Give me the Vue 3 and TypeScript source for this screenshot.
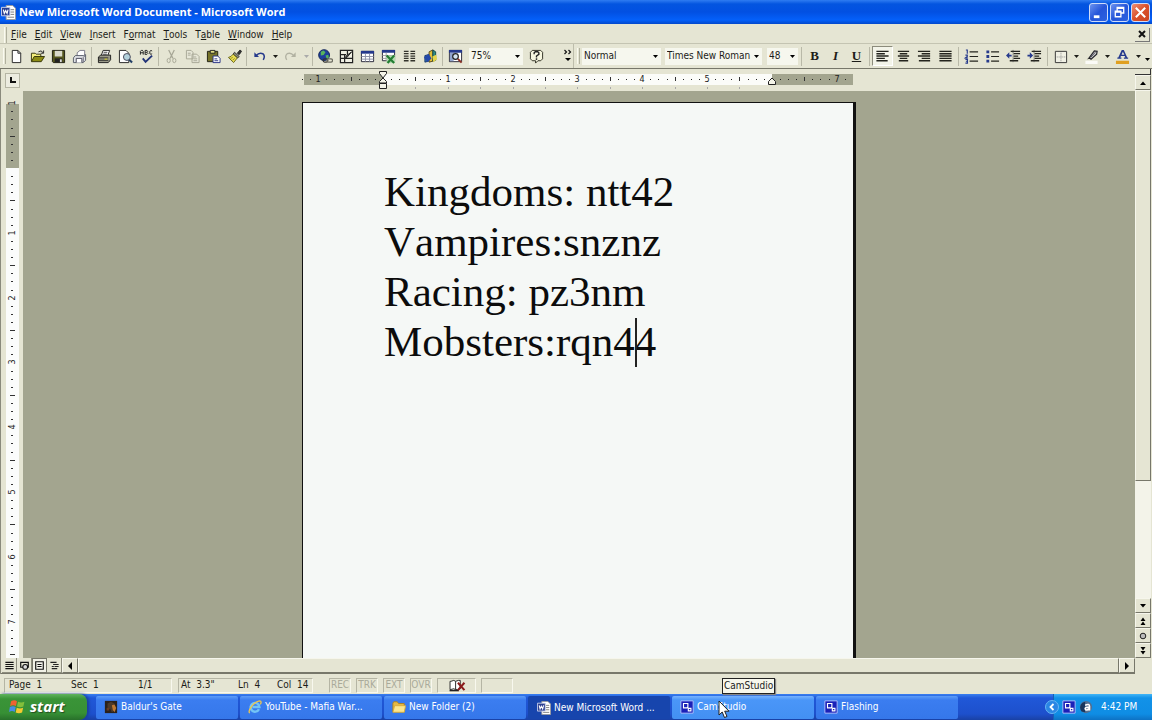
<script setup lang="ts">
import { ref } from 'vue'

interface Tool { icon: string; label: string; menu?: boolean; off?: boolean; on?: boolean }
interface Tick { at: number; kind: 'num' | 'half' | 'dot'; text: string }

const menus: [string, string, string][] = [
  ['', 'F', 'ile'], ['', 'E', 'dit'], ['', 'V', 'iew'], ['', 'I', 'nsert'], ['F', 'o', 'rmat'],
  ['', 'T', 'ools'], ['T', 'a', 'ble'], ['', 'W', 'indow'], ['', 'H', 'elp'],
]

const icons: Record<string, string> = {
  new: '<path d="M3.5 1.5h6l3 3v10h-9z" fill="#fff" stroke="#222"/><path d="M9.500 1.500v3h3" fill="none" stroke="#222"/>',
  open: '<path d="M1.500 13V4.500h4l1 1h5V8" fill="#f3ee7a" stroke="#33330a"/><path d="M1.500 13.500l3-5.500h11l-3.500 5.500z" fill="#8c8c14" stroke="#33330a"/><path d="M9 3q3-2.500 5 1M14.500 1.500V4.500h-3" fill="none" stroke="#222"/>',
  save: '<path d="M1.500 1.500h13v13h-12l-1-1z" fill="#55571f" stroke="#1b1b10"/><path d="M4 2h8v6H4z" fill="#d9d9cb"/><path d="M4 10h8v4H4z" fill="#222"/><path d="M9.500 11h2v3h-2z" fill="#ddd"/>',
  mail: '<path d="M5.500 7.500V4l3-2.500h5v6" fill="#fff" stroke="#778"/><path d="M1.500 9.500l2-2.500h9l2-1v6l-2.500 2.500H1.500z" fill="#dfe1e5" stroke="#555b66"/><path d="M4.500 14.500V10h6v4.500" fill="#fff" stroke="#445"/><path d="M12 14V9l2-2" fill="none" stroke="#667"/>',
  print: '<path d="M4.500 7l2-5.500h7l-2 5.500" fill="#fff" stroke="#222"/><path d="M7 3.500h4M6.500 5.500h4" stroke="#444"/><path d="M1.500 8.500l2.500-2h10.500v5l-2.500 3h-10.500z" fill="#9a9a8a" stroke="#1d1d1d"/><path d="M2 9.500h10M2 12h10" stroke="#222"/><path d="M8 10.800h3" stroke="#e6e01e"/>',
  preview: '<path d="M1.500 1.500h7l3 3v10h-10z" fill="#fff" stroke="#222"/><circle cx="9.500" cy="8.500" r="3.700" fill="#b4d2dc" stroke="#445"/><path d="M12 11.500l3 3" stroke="#233f66" stroke-width="2.200"/>',
  spell: '<path d="M1.500 6V2.500L3 1l1.500 1.500V6M1.500 4h3M6.500 6V1.500h2l.8 1-.8 1h-2M8.500 3.500l1 1.200-1 1h-2M14 2.200L12.800 1.500 11.500 2.500v2.500l1.300.7L14 5" fill="none" stroke="#222"/><path d="M4 10l3 3.800L14 7" fill="none" stroke="#233478" stroke-width="2"/>',
  cut: '<path d="M5 1l4.500 9M11 1L6.500 10" fill="none" stroke="#a6a695" stroke-width="1.300"/><ellipse cx="5" cy="12.300" rx="1.700" ry="2.300" fill="none" stroke="#a6a695"/><ellipse cx="11" cy="12.300" rx="1.700" ry="2.300" fill="none" stroke="#a6a695"/>',
  copy: '<path d="M1.500 1.500h5l2 2v7h-7zM7.500 5.500h5l2.500 2.500v6.500h-7.500z" fill="#e7e7d8" stroke="#a6a695"/><path d="M3 4.500h3M3 6.500h3M9 8.500h3M9 10.500h4M9 12.500h4" stroke="#a6a695"/>',
  paste: '<path d="M1.500 2.500h11v11h-11z" fill="#77742a" stroke="#1f1f12"/><path d="M4.500 1.500h5v3h-5z" fill="#e2dd86" stroke="#222"/><path d="M7.500 7.500h5l2.500 2.500v4.500h-7.500z" fill="#fff" stroke="#263085"/><path d="M9 10.500h3M9 12.500h4" stroke="#263085"/>',
  brush: '<path d="M11 4.500l3-3.500 1.500 1.500L13 6z" fill="#333" stroke="#222"/><path d="M8 3.500l5 4.500-1.500 1.500-5-4z" fill="#8b8b78" stroke="#333"/><path d="M6.500 5.500l4.500 4L7 14.500 1.500 9q3-.5 5-3.500z" fill="#e9dd4f" stroke="#69661f"/><path d="M4 10.500l2-2M6 12l2-2" stroke="#8a8425"/>',
  undo: '<path d="M2.500 3.500v5h5z" fill="#263a8c"/><path d="M4.500 7q3-3.500 7-2 3 2.500.5 6.500" fill="none" stroke="#263a8c" stroke-width="1.600"/>',
  redo: '<path d="M13.500 3.500v5h-5z" fill="#b2b2a2"/><path d="M11.500 7q-3-3.500-7-2-3 2.500-.5 6.500" fill="none" stroke="#b2b2a2" stroke-width="1.400"/>',
  globe: '<circle cx="6.500" cy="6.500" r="5.800" fill="#1e3f9c" stroke="#102457"/><path d="M3 3l3-1.500 2 2-2 3-3 .5zM8 7l3-1 .5 3-2 2z" fill="#58b35d"/><rect x="5.500" y="10.500" width="5" height="3.500" rx="1.700" fill="none" stroke="#333" stroke-width="1.300"/><rect x="9.500" y="10.500" width="6" height="3.500" rx="1.700" fill="none" stroke="#6c6c62" stroke-width="1.300"/>',
  tables: '<path d="M1.500 1.500h13v13h-13z" fill="#f0f0e4" stroke="#222" stroke-width="1.300"/><path d="M1.500 6h6M1.500 10h13M6 6v8.500M9 1.500v5" stroke="#222" stroke-width="1.300"/><path d="M13.500 3l-5 6-1.500 1 .5-2.500z" fill="#555" stroke="#222"/>',
  table: '<path d="M1.500 2.500h13v11h-13z" fill="#fff" stroke="#223"/><path d="M1 2h14v3H1z" fill="#24388c"/><path d="M1.500 8h13M1.500 10.800h13M5.800 5v8.500M10.200 5v8.500" stroke="#8b8fa5"/>',
  excel: '<path d="M1.500 1.500h13v11h-13z" fill="#fff" stroke="#223"/><path d="M1 1h14v3H1z" fill="#24388c"/><path d="M1.500 7h13M1.500 10h13M5.500 4v8.500" stroke="#9a9a9a"/><path d="M6 7h9v8H6z" fill="#b5dcb2"/><path d="M6 7l8 8M14 7l-7 8" stroke="#237d32" stroke-width="2.300"/>',
  columns: '<path d="M2 2.500h5M2 5h5M2 7.500h5M2 10h5M2 12.500h5M9 2.500h5M9 5h5M9 7.500h5M9 10h5M9 12.500h5" stroke="#33332c" stroke-width="1.400"/>',
  draw: '<path d="M2 7l4-1v7l-4 1z" fill="#2b70bd" stroke="#1d3b69"/><path d="M6.500 3l4-2v12l-4 1z" fill="#e3bd37" stroke="#5b4915"/><path d="M10.500 1l3 2v9l-3 1z" fill="#2f8e88" stroke="#164947"/><path d="M1 9l5-4 3 5-4 4z" fill="#2448a8"/><path d="M10 8l4-2 1 5-4 3z" fill="#e5d54b"/>',
  docmap: '<path d="M1.500 1.500h13v12h-13z" fill="#fff" stroke="#223"/><path d="M1 1h14v3H1z" fill="#24388c"/><path d="M2 4h4v9H2z" fill="#91a3cc"/><circle cx="8" cy="8" r="3" fill="#d5e4f0" stroke="#222" stroke-width="1.300"/><path d="M10.500 10.500l4 4" stroke="#8a2f25" stroke-width="2"/>',
  help: '<path d="M3.500 1.500h9l2 2v7l-2 2h-3L7 15v-2.500H3.500l-2-2v-7z" fill="#f6f6df" stroke="#2c2c20"/><path d="M5.500 5.500V4l1.200-1h2.600l1.200 1v1.800L8 7.500V9" fill="none" stroke="#222" stroke-width="1.500"/><path d="M7.200 10h1.600v1.500H7.200z"/>',
  left: '<path d="M1.500 2.500h13M1.500 5h9M1.500 7.500h13M1.500 10h9M1.500 12.500h12" stroke="#24241e" stroke-width="1.500"/>',
  center: '<path d="M2 2.500h12M4 5h8M2 7.500h12M4 10h8M3 12.500h10" stroke="#24241e" stroke-width="1.500"/>',
  right: '<path d="M1 2.500h13M5 5h9M1 7.500h13M5 10h9M2 12.500h12" stroke="#24241e" stroke-width="1.500"/>',
  justify: '<path d="M1.500 2.500h13M1.500 5h13M1.500 7.500h13M1.500 10h13M1.500 12.500h13" stroke="#24241e" stroke-width="1.500"/>',
  numbers: '<path d="M6 3h9M6 8h9M6 13h9" stroke="#24241e" stroke-width="1.300"/><path d="M2 1h1.500v4M1.500 6.500h2v1.500l-2 1.500h2.500M1.500 11h2.200v4H1.500M2 13h1.500" fill="none" stroke="#263a8c" stroke-width="1.200"/>',
  bullets: '<path d="M6.500 3h8.500M6.500 8h8.500M6.500 13h8.500" stroke="#24241e" stroke-width="1.300"/><path d="M1.500 1.500h3v3h-3zM1.500 6.500h3v3h-3zM1.500 11.500h3v3h-3z" fill="#263a8c"/>',
  outdent: '<path d="M5 2.500h10M8 5h7M8 7.500h5M8 10h7M4 12.500h9" stroke="#24241e" stroke-width="1.400"/><path d="M7.500 1v14" stroke="#555" stroke-dasharray="1 1"/><path d="M0 7l3.500-3.500V6H6v2H3.500v2.500z" fill="#263a8c"/>',
  indent: '<path d="M5 2.500h10M8 5h7M8 7.500h5M8 10h7M4 12.500h9" stroke="#24241e" stroke-width="1.400"/><path d="M7.500 1v14" stroke="#555" stroke-dasharray="1 1"/><path d="M6.500 7L3 3.500V6H.5v2H3v2.500z" fill="#263a8c"/>',
  border: '<path d="M2.500 2.500h12v12h-12z" fill="#f0f0e4" stroke="#333"/><path d="M8.500 4v10M4 8.500h10" stroke="#888" stroke-dasharray="1 1"/>',
  marker: '<path d="M5.500 9.500L11 2l3 .5-.5 3-6 5.500z" fill="#ccc" stroke="#26262e" stroke-width="1.300"/><path d="M3 11l3-2 1.500 1.500z" fill="#222"/><path d="M7 9l5-5.500" stroke="#445"/><path d="M1.500 12.500h13V16h-13z" fill="#fbfbf7"/>',
  color: '<path d="M7.200 1h2.200l3.600 8h1v1.500H9.500V9H11l-.6-1.600H6.300L5.700 9h1.100v1.500H2.500V9h1zM7 6h3L8.400 3z" fill="#24388c" fill-rule="evenodd"/><path d="M1 12.500h14V16H1z" fill="#e0a021"/>',
  word: '<path d="M5.500.5h7l3 3v12h-10z" fill="#fff" stroke="#999"/><path d="M10 5h4M10 7.500h4M10 10h4M7 13h7" stroke="#777"/><path d="M.5 2.500h9v9h-9z" fill="#2c3f91" stroke="#cfd6ee"/><path d="M2.500 5l1 4L5 6l1.500 3 1-4" fill="none" stroke="#fff" stroke-width="1.200"/>',
  gate: '<path d="M1 1h14v14H1z" fill="#2b211b"/><path d="M4 4l4-2 4 2v8l-3 2-2-4-3 2z" fill="#4d3a29"/><path d="M9 6l3-1 2 4-2 5-2-3z" fill="#bd7833"/><path d="M3 9h3v3H3z" fill="#663b22"/>',
  ie: '<path d="M12.500 10.500A5 5 0 1 1 13 8H5" fill="none" stroke="#73c4f6" stroke-width="2.800"/><path d="M2 15C-1 12 7 2 13 1c3 0 2 3 1 4" fill="none" stroke="#f0c64b" stroke-width="1.500"/>',
  folder: '<path d="M1 3.500l1-1.500h4l1.500 2H14v9.500H1z" fill="#e4b944" stroke="#ad7f1d"/><path d="M1 14l2-7.500h12.500L14 14z" fill="#fbe68e" stroke="#d9ab38"/>',
  cam: '<path d="M1 1h14v14H1z" fill="#1a20b8" stroke="#b9c6ff"/><path d="M4 4h5v5H4zM9.500 9.500h3v3h-3zM8 8l2 2" fill="none" stroke="#fff" stroke-width="1.300"/>',
  flag: '<path d="M2 4q3-2 5.500 0L6.500 8.500Q4 7 1 8.500z" fill="#ef622f"/><path d="M8.500 4.500q3 1.500 6 0l-1 4.500q-3 1.500-6 0z" fill="#83bf3b"/><path d="M.8 9.500q3-1.500 5.500 0l-1 4.500Q3 12.500 0 14z" fill="#478be5"/><path d="M7.300 10q3 1.500 6 0l-1 4.500q-3 1.500-6 0z" fill="#f5c930"/>',
  avast: '<circle cx="8" cy="8" r="7" fill="#536f91"/><path d="M4 3a7 7 0 0 0-1 10l4 1V2z" fill="#17355d"/><path d="M7 6q5-2 5 1v5M12 8.500q-5-.5-5 1.500 1 3 5 0" fill="none" stroke="#fff" stroke-width="1.800"/>',
  book: '<path d="M3.500 2.500l3-1 2 1v9l-2-1-4 1v-9zM8.500 2.500l3-1h2v9l-3 1-2-.5" fill="#fff" stroke="#222"/><path d="M2 12.500h10" stroke="#222" stroke-width="1.500"/><path d="M11 4l7 8M18 4l-7 8" stroke="#8b1c1c" stroke-width="2.200"/>',
  lines: '<path d="M2 3.500h12M2 6.500h12M2 9.500h12M2 12.500h12" stroke="#111" stroke-width="1.700"/>',
  web: '<path d="M2.500 3.500h11v7h-11z" fill="none" stroke="#111" stroke-width="1.700"/><circle cx="9" cy="10" r="3.500" fill="#ddd" stroke="#111" stroke-width="1.600"/>',
  layout: '<path d="M2.500 2.500h11v11h-11z" fill="#f6f6ee" stroke="#111" stroke-width="1.700"/><path d="M5 6.500h6M5 9.500h6" stroke="#111" stroke-width="1.500"/>',
  outline: '<path d="M2 3.500h9M6 6.500h8M4 9.500h3M8 9.500h6M4 12.500h8" stroke="#222" stroke-width="1.600"/>',
}

const groups: Tool[][] = [
  [{ icon: 'new', label: 'New' }, { icon: 'open', label: 'Open' }, { icon: 'save', label: 'Save' }, { icon: 'mail', label: 'E-mail' }],
  [{ icon: 'print', label: 'Print' }, { icon: 'preview', label: 'Print Preview' }, { icon: 'spell', label: 'Spelling' }],
  [{ icon: 'cut', label: 'Cut', off: true }, { icon: 'copy', label: 'Copy', off: true }, { icon: 'paste', label: 'Paste' }, { icon: 'brush', label: 'Format Painter' }],
  [{ icon: 'undo', label: 'Undo', menu: true }, { icon: 'redo', label: 'Redo', menu: true, off: true }],
  [{ icon: 'globe', label: 'Insert Hyperlink' }, { icon: 'tables', label: 'Tables and Borders' }, { icon: 'table', label: 'Insert Table' }, { icon: 'excel', label: 'Insert Worksheet' }, { icon: 'columns', label: 'Columns' }, { icon: 'draw', label: 'Drawing' }],
  [{ icon: 'docmap', label: 'Document Map' }],
]
const paragraphTools: Tool[][] = [
  [{ icon: 'left', label: 'Align Left', on: true }, { icon: 'center', label: 'Center' }, { icon: 'right', label: 'Align Right' }, { icon: 'justify', label: 'Justify' }],
  [{ icon: 'numbers', label: 'Numbering' }, { icon: 'bullets', label: 'Bullets' }, { icon: 'outdent', label: 'Decrease Indent' }, { icon: 'indent', label: 'Increase Indent' }],
  [{ icon: 'border', label: 'Borders', menu: true }, { icon: 'marker', label: 'Highlight', menu: true }, { icon: 'color', label: 'Font Color', menu: true }],
]

const zoom = ref('75%')
const style = ref('Normal')
const font = ref('Times New Roman')
const size = ref('48')

const INCH = 64.8
// Ruler marks every eighth of an inch; origin is the position of the page margin.
function marks(origin: number, from: number, to: number): Tick[] {
  const out: Tick[] = []
  for (let i = from; i <= to; i++) {
    if (i === 0) continue
    const whole = i % 8 === 0
    out.push({ at: Math.round(origin + (i * INCH) / 8), kind: whole ? 'num' : i % 4 === 0 ? 'half' : 'dot', text: String(Math.abs(i / 8)) })
  }
  return out
}
const across = marks(81, -10, 57).filter(t => Math.abs(t.at - 470) > 3)
const down = marks(77, -8, 60)

const modes = [
  { icon: 'lines', label: 'Normal View' }, { icon: 'web', label: 'Web Layout View' },
  { icon: 'layout', label: 'Print Layout View', on: true }, { icon: 'outline', label: 'Outline View' },
]
const flags = ['REC', 'TRK', 'EXT', 'OVR']
const tasks = [
  { icon: 'gate', title: "Baldur's Gate" },
  { icon: 'ie', title: 'YouTube - Mafia War...' },
  { icon: 'folder', title: 'New Folder (2)' },
  { icon: 'word', title: 'New Microsoft Word ...', state: 'active' },
  { icon: 'cam', title: 'CamStudio', state: 'hover' },
  { icon: 'cam', title: 'Flashing' },
]
</script>

<template>
  <div class="desktop">
    <header class="title">
      <svg class="ic" viewBox="0 0 16 16" v-html="icons.word" />
      <h1>New Microsoft Word Document - Microsoft Word</h1>
      <button class="cap" aria-label="Minimize"><svg viewBox="0 0 16 16"><path d="M3 11h6v3H3z" fill="#fff" /></svg></button>
      <button class="cap" aria-label="Restore"><svg viewBox="0 0 16 16"><path d="M5.500 6V2.500h7v6H10M3.500 6.500h6v6h-6zM3 7.500h7M5 3.500h8" fill="none" stroke="#fff" stroke-width="1.400" /></svg></button>
      <button class="cap close" aria-label="Close"><svg viewBox="0 0 16 16"><path d="M3 3l10 10M13 3L3 13" stroke="#fff" stroke-width="2.200" /></svg></button>
    </header>

    <nav class="menu">
      <i class="grip" />
      <button v-for="m in menus" :key="m.join('')">{{ m[0] }}<u>{{ m[1] }}</u>{{ m[2] }}</button>
      <button class="shut" aria-label="Close document"><svg viewBox="0 0 10 10"><path d="M2 2l6 6M8 2L2 8" stroke="#111" stroke-width="2" /></svg></button>
    </nav>

    <div class="tools">
      <div class="bar standard">
        <i class="grip" />
        <template v-for="(g, gi) in groups" :key="gi">
          <i v-if="gi" class="sep" />
          <template v-for="t in g" :key="t.icon">
            <button class="tool" :aria-label="t.label" :disabled="t.off"><svg class="ic" viewBox="0 0 16 16" v-html="icons[t.icon]" /></button>
            <button v-if="t.menu" class="drop" :disabled="t.off" :aria-label="t.label + ' list'"><svg viewBox="0 0 5 3"><path d="M0 0h5L2.500 3z" fill="currentColor" /></svg></button>
          </template>
        </template>
        <div class="combo zoom">
          <select v-model="zoom" aria-label="Zoom"><option>75%</option><option>100%</option></select>
          <svg viewBox="0 0 5 3"><path d="M0 0h5L2.500 3z" /></svg>
        </div>
        <button class="tool" aria-label="Help"><svg class="ic" viewBox="0 0 16 16" v-html="icons.help" /></button>
        <button class="more" aria-label="More buttons"><svg viewBox="0 0 8 14"><path d="M.5 1l2 2-2 2M4.500 1l2 2-2 2" fill="none" stroke="#111" stroke-width="1.200" /><path d="M1 9h6l-3 3z" /></svg></button>
      </div>
      <div class="bar formatting">
        <i class="grip" />
        <div class="combo style">
          <select v-model="style" aria-label="Style"><option>Normal</option><option>Heading 1</option></select>
          <svg viewBox="0 0 5 3"><path d="M0 0h5L2.500 3z" /></svg>
        </div>
        <div class="combo font">
          <select v-model="font" aria-label="Font"><option>Times New Roman</option><option>Arial</option></select>
          <svg viewBox="0 0 5 3"><path d="M0 0h5L2.500 3z" /></svg>
        </div>
        <div class="combo size">
          <select v-model="size" aria-label="Font size"><option>48</option><option>72</option></select>
          <svg viewBox="0 0 5 3"><path d="M0 0h5L2.500 3z" /></svg>
        </div>
        <i class="sep" />
        <button class="tool face b" aria-label="Bold">B</button>
        <button class="tool face i" aria-label="Italic">I</button>
        <button class="tool face u" aria-label="Underline">U</button>
        <template v-for="(g, gi) in paragraphTools" :key="gi">
          <i class="sep" />
          <template v-for="t in g" :key="t.icon">
            <button class="tool" :class="{ on: t.on }" :aria-label="t.label"><svg class="ic" viewBox="0 0 16 16" v-html="icons[t.icon]" /></button>
            <button v-if="t.menu" class="drop" :aria-label="t.label + ' list'"><svg viewBox="0 0 5 3"><path d="M0 0h5L2.500 3z" fill="currentColor" /></svg></button>
          </template>
        </template>
        <button class="drop last" aria-label="Toolbar options"><svg viewBox="0 0 5 3"><path d="M0 0h5L2.500 3z" /></svg></button>
      </div>
    </div>

    <main class="window">
      <div class="left">
        <div class="hruler">
          <button class="tab" aria-label="Tab stop"><svg viewBox="0 0 8 8"><path d="M2 1v5h5" fill="none" stroke="#111" stroke-width="2" /></svg></button>
          <div class="track">
            <svg class="scale" viewBox="0 0 554 22" width="554" height="22">
              <rect x="2" y="5" width="549" height="11" fill="#a3a58f" />
              <rect x="81" y="5" width="389" height="11" fill="#fbfcf9" />
              <template v-for="t in across" :key="t.at">
                <text v-if="t.kind === 'num'" :x="t.at" y="13" text-anchor="middle">{{ t.text }}</text>
                <rect v-else-if="t.kind === 'half'" :x="t.at" y="8" width="1" height="4" fill="#333" />
                <rect v-else :x="t.at" y="10" width="1" height="1" fill="#222" />
                <rect v-if="t.kind !== 'dot' && t.at > 82 && t.at < 470" :x="t.at" y="18" width="1" height="2" fill="#aaa" />
              </template>
              <path d="M77.500 2.500h7v2l-3.500 4.500-3.500-4.500zM77.500 14v-1.500l3.500-3.500 3.500 3.500V14zM77.500 14.500h7v5h-7z" fill="#f4f4e8" stroke="#222" />
              <path d="M466.500 15.500v-3l3.500-3.500 3.500 3.500v3z" fill="#f4f4e8" stroke="#222" />
            </svg>
          </div>
        </div>
        <div class="view">
          <div class="vruler">
            <svg class="scale" width="22" height="567">
              <rect x="6" y="13" width="13" height="64" fill="#a3a58f" />
              <rect x="6" y="77" width="13" height="490" fill="#fbfcfb" />
              <template v-for="t in down" :key="t.at">
                <text v-if="t.kind === 'num'" :transform="`translate(15 ${t.at}) rotate(-90)`" text-anchor="middle">{{ t.text }}</text>
                <rect v-else-if="t.kind === 'half'" x="10" :y="t.at" width="5" height="1" fill="#333" />
                <rect v-else x="11" :y="t.at" width="2" height="1" fill="#333" />
              </template>
            </svg>
          </div>
          <div class="canvas">
            <article class="page" contenteditable="true" spellcheck="false" role="textbox" aria-multiline="true" aria-label="Document">
              <p>Kingdoms: ntt42</p>
              <p>Vampires:snznz</p>
              <p>Racing: pz3nm</p>
              <p>Mobsters:rqn4<span class="caret" />4</p>
            </article>
          </div>
        </div>
        <div class="hscroll">
          <button v-for="m in modes" :key="m.icon" class="mode" :class="{ on: m.on }" :aria-label="m.label"><svg viewBox="0 0 16 16" v-html="icons[m.icon]" /></button>
          <button class="arrow" aria-label="Scroll left"><svg viewBox="0 0 8 8"><path d="M6 0v8L2 4z" /></svg></button>
          <div class="thumb" />
          <button class="arrow" aria-label="Scroll right"><svg viewBox="0 0 8 8"><path d="M2 0v8l4-4z" /></svg></button>
        </div>
      </div>
      <div class="vscroll">
        <i class="split" />
        <button class="arrow" aria-label="Scroll up"><svg viewBox="0 0 8 8"><path d="M1 6h6L4 2.500z" /></svg></button>
        <div class="rail"><div class="thumb" /></div>
        <button class="arrow" aria-label="Scroll down"><svg viewBox="0 0 8 8"><path d="M1 2h6L4 5.500z" /></svg></button>
        <button class="arrow" aria-label="Previous page"><svg viewBox="0 0 8 8"><path d="M1.500 4h5L4 .5zM1.500 8h5L4 4.500z" /></svg></button>
        <button class="arrow" aria-label="Select browse object"><svg viewBox="0 0 8 8"><circle cx="4" cy="4" r="2.800" fill="#bbb" stroke="#222" /></svg></button>
        <button class="arrow" aria-label="Next page"><svg viewBox="0 0 8 8"><path d="M1.500 0h5L4 3.500zM1.500 4h5L4 7.500z" /></svg></button>
        <i class="corner" />
      </div>
    </main>

    <footer class="status">
      <div class="cell place"><span>Page&nbsp; 1</span><span>Sec&nbsp; 1</span><span>1/1</span></div>
      <div class="cell spot"><span>At&nbsp; 3.3"</span><span>Ln&nbsp; 4</span><span>Col&nbsp; 14</span></div>
      <button v-for="f in flags" :key="f" class="cell flag">{{ f }}</button>
      <div class="cell book"><svg viewBox="0 0 20 14" v-html="icons.book" /></div>
      <div class="cell blank" />
    </footer>

    <div class="taskbar">
      <button class="start"><svg viewBox="0 0 16 16" v-html="icons.flag" />start</button>
      <div class="tasks">
        <button v-for="t in tasks" :key="t.title" class="task" :class="t.state">
          <svg class="ic" viewBox="0 0 16 16" v-html="icons[t.icon]" /><span>{{ t.title }}</span>
          <template v-if="t.state === 'hover'">
            <span class="tip" role="tooltip">CamStudio</span>
            <svg class="pointer" viewBox="0 0 12 19"><path d="M1 1v14l3.200-3 2.300 5.500 2.500-1-2.300-5.300H11z" fill="#fff" stroke="#222" /></svg>
          </template>
        </button>
      </div>
      <div class="tray">
        <button class="chev" aria-label="Show hidden icons"><svg viewBox="0 0 12 12"><path d="M7.500 3L4.500 6l3 3" fill="none" stroke="#fff" stroke-width="1.800" /></svg></button>
        <svg class="ic" viewBox="0 0 16 16" v-html="icons.cam" />
        <svg class="ic" viewBox="0 0 16 16" v-html="icons.avast" />
        <time>4:42 PM</time>
      </div>
    </div>
  </div>
</template>

<style>
html, body { margin: 0; overflow: hidden; }
</style>

<style scoped>
.desktop {
  display: flex; flex-direction: column; height: 100vh; overflow: hidden;
  background: #e5e5d3; color: #1c1c18;
  font: 10px/12px "DejaVu Sans Condensed", "Noto Sans", sans-serif;
}
.desktop * { box-sizing: border-box; }
button { margin: 0; padding: 0; border: 0; background: none; font: inherit; color: inherit; flex: none; display: flex; align-items: center; justify-content: center; }
svg { display: block; flex: none; }
i { display: block; flex: none; }
.ic { width: 15px; height: 15px; }

.title { flex: none; display: flex; align-items: center; gap: 2px; height: 24px; padding: 0 2px 0 1px; background: linear-gradient(#2f7cf2, #0455e0 4px, #0250e2 12px, #0460fa 20px, #0348cb); }
.title h1 { flex: 1; margin: 0; padding-left: 1px; font: bold 11px/16px "Open Sans", sans-serif; color: #fff; }
.cap { width: 19px; height: 19px; border: 1px solid #cfdcf9; border-radius: 3px; background: linear-gradient(135deg, #6c93f0, #2555d9 50%, #2c62e0); }
.cap svg { width: 15px; height: 15px; }
.close { background: linear-gradient(135deg, #ee9077, #d9502a 50%, #cc4420); }

.menu { flex: none; display: flex; align-items: center; height: 20px; padding: 2px 2px 0 4px; border-bottom: 1px solid #c4c4b2; }
.grip { width: 3px; height: 16px; border-left: 1px solid #fafaf0; border-right: 1px solid #b0b09e; }
.menu button { padding: 0 4px; height: 16px; white-space: pre; }
.menu .shut { margin-left: auto; width: 15px; height: 14px; padding: 0; border-right: 1px solid #777; border-bottom: 1px solid #777; }
.shut svg { width: 10px; height: 10px; }

.tools { flex: none; display: flex; height: 25px; border-bottom: 1px solid #77776a; }
.bar { display: flex; align-items: center; padding-left: 3px; }
.standard { flex: none; width: 574px; border-right: 1px solid #bdbdab; }
.formatting { flex: 1; min-width: 0; }
.tool { width: 21px; height: 20px; }
.tool.on { background: #f3f4e9; border: 1px solid; border-color: #8c8c7c #fff #fff #8c8c7c; }
.drop { width: 10px; height: 18px; }
.drop:disabled { color: #aaa; }
.drop svg, .combo svg { width: 5px; height: 3px; }
.last { width: 8px; margin: 7px 2px 0 auto; height: 8px; }
.sep { width: 1px; height: 19px; margin: 0 2px 0 1px; background: #b9b9a8; }
.formatting .sep { margin: 0 2px; }
.combo { flex: none; display: flex; align-items: center; height: 17px; padding-right: 3px; background: #f6f7ee; }
.combo select { flex: 1; min-width: 0; height: 16px; padding: 0 0 1px 2px; border: 0; outline: 0; appearance: none; background: none; font: inherit; color: inherit; }
.zoom { width: 54px; margin: 0 3px; }
.style { width: 79px; margin: 0 4px 0 2px; }
.font { width: 97px; margin-right: 5px; }
.size { width: 31px; margin-right: 1px; }
.more { width: 10px; height: 18px; margin: 0 0 0 auto; }
.more svg { width: 8px; height: 14px; }
.face { font: bold 13px/16px "Liberation Serif", serif; }
.i { font-style: italic; }
.u { text-decoration: underline; }

.window { flex: 1; min-height: 0; display: flex; padding-right: 1px; border-left: 1px solid #8a8a7c; }
.left { flex: 1; min-width: 0; display: flex; flex-direction: column; }
.hruler { flex: none; display: flex; align-items: center; height: 22px; padding-left: 4px; }
.tab { width: 15px; height: 15px; border: 1px solid #b5b5a4; background: #ecece0; }
.tab svg { width: 8px; height: 8px; }
.track { flex: 1; display: flex; justify-content: center; padding-left: 3px; }
.scale text { font: 9px "DejaVu Sans Condensed", "Noto Sans", sans-serif; fill: #222; }
.view { flex: 1; min-height: 0; display: flex; }
.vruler { flex: none; width: 22px; }
.vruler svg { margin-left: -1px; overflow: visible; }
.view { overflow: hidden; }
.canvas { flex: 1; display: flex; justify-content: center; padding: 11px 0 0; overflow: hidden; background: #a3a58f; }
.page { width: 554px; height: 720px; padding: 64px 81px; border: 1px solid #111; border-right-width: 3px; background: #f5f8f6; color: #0c0c0c; outline: 0; font: 43px/50px "Liberation Serif", "Times New Roman", serif; font-kerning: none; white-space: nowrap; }
.page p { margin: 0; }
.caret { position: relative; }
.caret::after { content: ""; position: absolute; left: 0; top: 0; width: 2px; height: 49px; background: #222; }

.hscroll { flex: none; display: flex; height: 16px; padding-left: 1px; border-bottom: 1px solid #77776a; }
.mode { width: 15px; border-right: 1px solid #8d8d7e; border-bottom: 1px solid #8d8d7e; }
.mode.on { background: #f1f1e6; border: 1px solid #77776a; }
.mode svg { width: 11px; height: 11px; }
.arrow { width: 16px; height: 15px; border: 1px solid; border-color: #f6f6ec #77776a #77776a #f6f6ec; }
.arrow svg { width: 8px; height: 8px; }
.thumb { flex: 1; border: 1px solid; border-color: #f6f6ec #77776a #77776a #f6f6ec; background: #e5e5d3; }
.vscroll { flex: none; width: 16px; display: flex; flex-direction: column; }
.split { height: 6px; border-bottom: 1px solid #333; border-right: 1px solid #333; }
.rail { flex: 1; display: flex; flex-direction: column; background: #f3f3e9; }
.rail .thumb { flex: 0 0 77%; }
.corner { height: 16px; }

.status { flex: none; display: flex; align-items: center; height: 20px; padding: 2px 4px 0; }
.cell { height: 15px; border: 1px solid; border-color: #b5b5a4 #f8f8ee #f8f8ee #b5b5a4; }
.place { display: grid; grid-template-columns: 62px 67px 1fr; width: 168px; padding-left: 4px; margin-right: 6px; }
.spot { display: grid; grid-template-columns: 57px 39px 1fr; width: 135px; padding-left: 2px; margin-right: 16px; }
.flag { width: 22px; margin-right: 5px; color: #aaaa9a; }
.book { width: 39px; margin-right: 5px; display: flex; justify-content: center; }
.book svg { width: 20px; height: 13px; }
.blank { width: 32px; }

.taskbar { flex: none; display: flex; height: 26px; background: linear-gradient(#3a80f0, #2058d8 4px, #1d50cc 20px, #1941a5); color: #fff; }
.start { width: 87px; gap: 4px; justify-content: flex-start; padding: 0 0 3px 9px; border-radius: 0 8px 8px 0; background: linear-gradient(#5fb35d, #3a9438 5px, #379035 19px, #28702a); box-shadow: 2px 0 3px #1a3f9a; font: italic bold 15px/20px "Open Sans", sans-serif; text-shadow: 1px 1px 1px #244d20; }
.start svg { width: 17px; height: 17px; }
.tasks { flex: 1; min-width: 0; display: flex; gap: 2px; padding: 2px 0 1px 9px; }
.task { position: relative; flex: 0 1 142px; justify-content: flex-start; gap: 3px; padding: 0 0 1px 8px; border-radius: 2px; background: linear-gradient(#5c9cf8, #3b7df0 4px, #3577ea); white-space: nowrap; }
.task .ic { width: 14px; height: 14px; }
.active { background: #1745ad; padding: 0 0 0 9px; }
.hover { background: linear-gradient(#76b2ff, #4a96f8 4px, #4390f3); }
.tip { position: absolute; left: 50px; top: -18px; padding: 1px; border: 1px solid #222; background: #f7f7ec; color: #222; box-shadow: 1px 1px 1px #888; line-height: 12px; }
.task .pointer { position: absolute; left: 46px; top: 4px; width: 12px; height: 19px; }
.tray { flex: none; width: 99px; display: flex; align-items: center; gap: 3px; background: linear-gradient(#42b6f7, #1292e8 4px, #0f8de4 20px, #0d72c4); border-left: 1px solid #1660b5; }
.tray .ic { width: 14px; height: 14px; }
.chev { width: 14px; height: 14px; margin-left: -9px; border-radius: 50%; background: #2a86e4; border: 1px solid #66b6f4; }
.chev svg { width: 12px; height: 12px; }
.tray time { margin-left: 5px; white-space: nowrap; }
</style>
